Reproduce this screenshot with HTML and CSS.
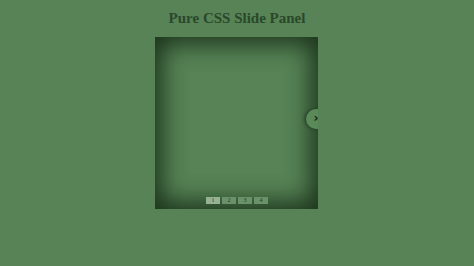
FILE: index.html
```html
<!DOCTYPE html>
<html lang="en">
<head>
  <meta charset="UTF-8" />
  <title>Pure CSS Slide Panel</title>
  <link rel="stylesheet" href="styles.css">
</head>
<body>
  <h1>Pure CSS Slide Panel</h1>

  <div class="panel">
    <div class="slide"></div>
    <div class="pager">
      <span class="page active">1</span>
      <span class="page">2</span>
      <span class="page">3</span>
      <span class="page">4</span>
    </div>
    <div class="next">&rsaquo;</div>
  </div>
</body>
</html>
```

FILE: styles.css
```css
html, body {
  margin: 0;
  padding: 0;
}

body {
  background-color: #578356;
  font-family: "Liberation Serif", serif;
  height: 266px;
  overflow: hidden;
}

h1 {
  margin: 0;
  padding-top: 10px;
  height: 27px;
  text-align: center;
  font-size: 15px;
  letter-spacing: 0;
  font-weight: bold;
  color: #2a482a;
}

.panel {
  position: relative;
  overflow: hidden;
  width: 163px;
  height: 172px;
  margin: 0 0 0 155px;
  background-color: #578356;
  box-shadow: inset 0 0 24px 7px rgba(10, 30, 10, 0.78);
  display: flex;
  flex-direction: column;
  justify-content: flex-end;
}

.slide {
  flex: 1;
}

.pager {
  display: flex;
  justify-content: center;
  gap: 2px;
  padding: 0 0 5px 1px;
}

.page {
  width: 14px;
  height: 7px;
  line-height: 7px;
  font-size: 6px;
  text-align: center;
  color: #223a22;
  background-color: #6a9169;
}

.page.active {
  background-color: #95b394;
}

.next {
  position: absolute;
  left: 151px;
  top: 72px;
  width: 20px;
  height: 20px;
  border-radius: 50%;
  background-color: #5b8a5a;
  box-shadow: -2px 0 3px rgba(20, 40, 20, 0.5);
  color: #152615;
  font-family: "DejaVu Sans", sans-serif;
  font-weight: bold;
  font-size: 12px;
  line-height: 18px;
  text-align: center;
}
```
